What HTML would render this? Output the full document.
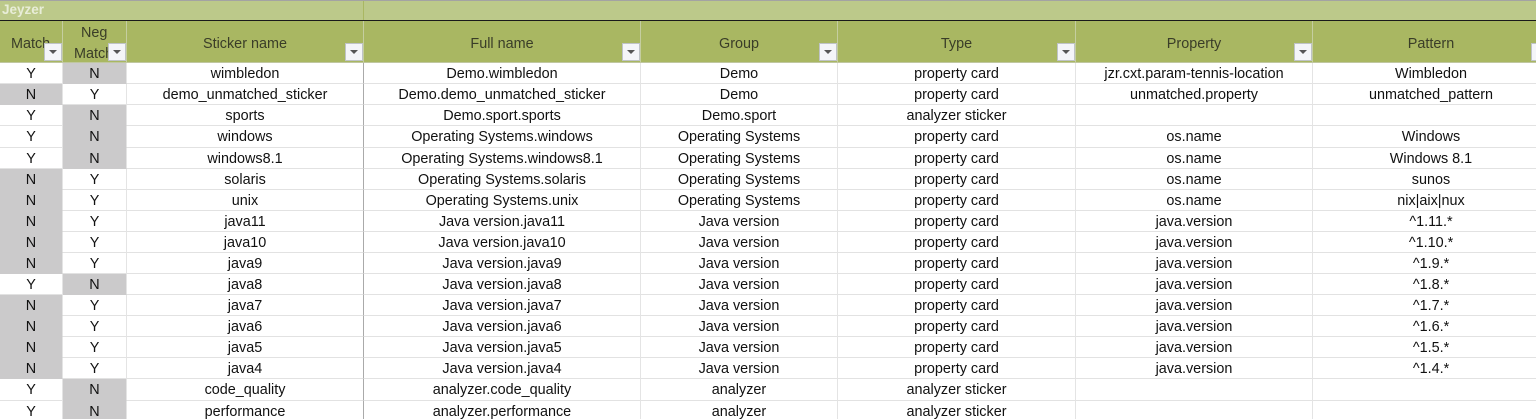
<!DOCTYPE html>
<html><head><meta charset="utf-8">
<style>
html,body{margin:0;padding:0;width:1536px;height:419px;overflow:hidden;background:#fff;}
body{font-family:"Liberation Sans",sans-serif;position:relative;color:#111;}
#wrap{position:absolute;left:0;top:0;width:1536px;height:419px;overflow:hidden;filter:blur(.3px);}
#top{position:absolute;left:0;top:0;width:1536px;height:20px;background:#bcc98a;border-top:1px solid #a3a3a3;box-sizing:border-box;}
#jz{position:absolute;left:2px;top:1px;font-size:13.5px;line-height:16px;font-weight:bold;color:#e8edd8;}
#tl{position:absolute;left:363px;top:0;width:1px;height:20px;background:#a9b762;}
#blk{position:absolute;left:0;top:20px;width:1536px;height:1px;background:#1a1a1a;}
table{position:absolute;left:0;top:21px;border-collapse:separate;border-spacing:0;table-layout:fixed;width:1550px;}
th{height:42px;padding:6px 0 0;background:#a9b762;font-weight:normal;font-size:14.4px;color:#3a3d28;text-align:center;vertical-align:middle;border-right:1px solid #c5cea0;border-bottom:1px solid #c0c7a0;box-sizing:border-box;position:relative;line-height:21px;overflow:hidden;}
td{height:21px;padding:2px 0 0;font-size:14.4px;text-align:center;vertical-align:top;border-right:1px solid #e4e4e4;border-bottom:1px solid #e2e2e2;box-sizing:border-box;white-space:nowrap;overflow:hidden;line-height:18px;}
tr.t td{height:22px;}
td.g{background:#cbcacb;border-bottom-color:#cbcacb;}
td.e{border-right:1px solid #aaa;}
th span{position:absolute;left:11px;white-space:nowrap;line-height:21px;}
.b{position:absolute;right:0;bottom:1px;width:18px;height:18px;box-sizing:border-box;background:#f4f5f8;border:1px solid #bfc3c7;}
.b:after{content:"";position:absolute;left:4px;top:6px;border-left:4px solid transparent;border-right:4px solid transparent;border-top:4px solid #555;}
</style></head><body>
<div id="wrap">
<div id="top"><div id="jz">Jeyzer</div><div id="tl"></div></div>
<div id="blk"></div>
<table>
<colgroup><col style="width:63px"><col style="width:64px"><col style="width:237px"><col style="width:277px"><col style="width:197px"><col style="width:238px"><col style="width:237px"><col style="width:237px"></colgroup>
<tr>
<th><span style="top:13px">Match</span><i class="b"></i></th>
<th><span style="top:2px;left:18px">Neg</span><span style="top:23px;left:11px">Match</span><i class="b"></i></th>
<th>Sticker name<i class="b"></i></th>
<th>Full name<i class="b"></i></th>
<th>Group<i class="b"></i></th>
<th>Type<i class="b"></i></th>
<th>Property<i class="b"></i></th>
<th>Pattern<i class="b"></i></th>
</tr>
<tr><td>Y</td><td class="g">N</td><td class="e">wimbledon</td><td>Demo.wimbledon</td><td>Demo</td><td>property card</td><td>jzr.cxt.param-tennis-location</td><td>Wimbledon</td></tr>
<tr><td class="g">N</td><td>Y</td><td class="e">demo_unmatched_sticker</td><td>Demo.demo_unmatched_sticker</td><td>Demo</td><td>property card</td><td>unmatched.property</td><td>unmatched_pattern</td></tr>
<tr><td>Y</td><td class="g">N</td><td class="e">sports</td><td>Demo.sport.sports</td><td>Demo.sport</td><td>analyzer sticker</td><td></td><td></td></tr>
<tr class="t"><td>Y</td><td class="g">N</td><td class="e">windows</td><td>Operating Systems.windows</td><td>Operating Systems</td><td>property card</td><td>os.name</td><td>Windows</td></tr>
<tr><td>Y</td><td class="g">N</td><td class="e">windows8.1</td><td>Operating Systems.windows8.1</td><td>Operating Systems</td><td>property card</td><td>os.name</td><td>Windows 8.1</td></tr>
<tr><td class="g">N</td><td>Y</td><td class="e">solaris</td><td>Operating Systems.solaris</td><td>Operating Systems</td><td>property card</td><td>os.name</td><td>sunos</td></tr>
<tr><td class="g">N</td><td>Y</td><td class="e">unix</td><td>Operating Systems.unix</td><td>Operating Systems</td><td>property card</td><td>os.name</td><td>nix|aix|nux</td></tr>
<tr><td class="g">N</td><td>Y</td><td class="e">java11</td><td>Java version.java11</td><td>Java version</td><td>property card</td><td>java.version</td><td>^1.11.*</td></tr>
<tr><td class="g">N</td><td>Y</td><td class="e">java10</td><td>Java version.java10</td><td>Java version</td><td>property card</td><td>java.version</td><td>^1.10.*</td></tr>
<tr><td class="g">N</td><td>Y</td><td class="e">java9</td><td>Java version.java9</td><td>Java version</td><td>property card</td><td>java.version</td><td>^1.9.*</td></tr>
<tr><td>Y</td><td class="g">N</td><td class="e">java8</td><td>Java version.java8</td><td>Java version</td><td>property card</td><td>java.version</td><td>^1.8.*</td></tr>
<tr><td class="g">N</td><td>Y</td><td class="e">java7</td><td>Java version.java7</td><td>Java version</td><td>property card</td><td>java.version</td><td>^1.7.*</td></tr>
<tr><td class="g">N</td><td>Y</td><td class="e">java6</td><td>Java version.java6</td><td>Java version</td><td>property card</td><td>java.version</td><td>^1.6.*</td></tr>
<tr><td class="g">N</td><td>Y</td><td class="e">java5</td><td>Java version.java5</td><td>Java version</td><td>property card</td><td>java.version</td><td>^1.5.*</td></tr>
<tr><td class="g">N</td><td>Y</td><td class="e">java4</td><td>Java version.java4</td><td>Java version</td><td>property card</td><td>java.version</td><td>^1.4.*</td></tr>
<tr class="t"><td>Y</td><td class="g">N</td><td class="e">code_quality</td><td>analyzer.code_quality</td><td>analyzer</td><td>analyzer sticker</td><td></td><td></td></tr>
<tr><td>Y</td><td class="g">N</td><td class="e">performance</td><td>analyzer.performance</td><td>analyzer</td><td>analyzer sticker</td><td></td><td></td></tr>
</table>
</div>
</body></html>
